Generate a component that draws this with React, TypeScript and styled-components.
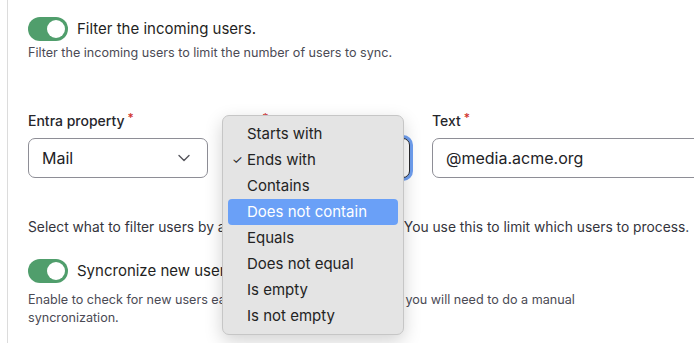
import React from "react";
import styled, { createGlobalStyle } from "styled-components";

const GlobalStyle = createGlobalStyle`
  html, body {
    margin: 0;
    padding: 0;
    background: #ffffff;
    overflow: hidden;
  }
  body {
    font-family: Inter, "Noto Sans", "Liberation Sans", sans-serif;
    color: #222226;
  }
`;

const Page = styled.div`
  margin-left: 7px;
  border-left: 1px solid #dcdcdc;
  min-height: 343px;
  padding: 17px 0 0 20px;
  box-sizing: border-box;
  width: 800px;
`;

const ToggleRow = styled.div<{ top?: number }>`
  display: flex;
  align-items: center;
  gap: 9px;
  height: 24px;
  margin-top: ${(p) => p.top ?? 0}px;
`;

const Switch = styled.div<{ on: boolean }>`
  position: relative;
  width: 40px;
  height: 24px;
  border-radius: 12px;
  background: ${(p) => (p.on ? "#509e6c" : "#c9c9cf")};
  flex: none;

  &::after {
    content: "";
    position: absolute;
    top: 3px;
    left: ${(p) => (p.on ? "19px" : "3px")};
    width: 18px;
    height: 18px;
    border-radius: 50%;
    background: #ffffff;
  }
`;

const ToggleLabel = styled.span`
  font-size: 15px;
  line-height: 24px;
  color: #1f1f23;
  white-space: nowrap;
`;

const Help = styled.p<{ top: number; maxWidth?: number }>`
  margin: ${(p) => p.top}px 0 0;
  font-size: 12.6px;
  line-height: 18px;
  color: #4b4b55;
  max-width: ${(p) => (p.maxWidth ? `${p.maxWidth}px` : "none")};
`;

const FieldHelp = styled.p`
  margin: 40px 0 0;
  font-size: 13.8px;
  line-height: 18px;
  color: #34343c;
  white-space: nowrap;
`;

const Fields = styled.div`
  display: grid;
  grid-template-columns: 180px 180px 320px;
  column-gap: 22px;
  margin-top: 50px;
`;

const Field = styled.div`
  position: relative;
  display: flex;
  flex-direction: column;
  gap: 8px;
`;

const Label = styled.label`
  font-size: 14px;
  line-height: 18px;
  font-weight: 500;
  color: #26262b;
  display: flex;
  gap: 3px;

  span {
    color: #d0312d;
    font-size: 12px;
    line-height: 12px;
  }
`;

const SelectBox = styled.div<{ focused?: boolean }>`
  height: 40px;
  box-sizing: border-box;
  border: 1px solid ${(p) => (p.focused ? "#2a2a2e" : "#8e8e96")};
  border-radius: 7px;
  box-shadow: ${(p) => (p.focused ? "0 0 0 3px #6f9ff0" : "none")};
  display: flex;
  align-items: center;
  justify-content: space-between;
  padding: 0 17px 0 13px;
  font-size: 16px;
  color: #222226;
  background: #ffffff;
`;

const TextInput = styled.div`
  height: 40px;
  box-sizing: border-box;
  border: 1px solid #8e8e96;
  border-radius: 7px;
  display: flex;
  align-items: center;
  padding: 0 13px;
  font-size: 16px;
  color: #222226;
`;

const Menu = styled.ul`
  position: absolute;
  left: -8px;
  top: 3px;
  width: 182px;
  margin: 0;
  padding: 5px;
  box-sizing: border-box;
  list-style: none;
  background: #e4e4e4;
  border: 1px solid #c6c6c6;
  border-radius: 7px;
  box-shadow: 0 6px 18px rgba(0, 0, 0, 0.18);
  z-index: 10;
`;

const MenuItem = styled.li<{ active?: boolean }>`
  position: relative;
  height: 26px;
  line-height: 26px;
  padding-left: 19px;
  border-radius: 4px;
  font-size: 15px;
  color: ${(p) => (p.active ? "#ffffff" : "#232323")};
  background: ${(p) => (p.active ? "#6aa0f7" : "transparent")};
`;

const Check = styled.span`
  position: absolute;
  left: 4px;
  top: 0;
  font-size: 12px;
`;

const Chevron = () => (
  <svg width="12" height="8" viewBox="0 0 12 8" fill="none">
    <path d="M1 1.5l5 5 5-5" stroke="#55555c" strokeWidth="1.4" strokeLinecap="round" strokeLinejoin="round" />
  </svg>
);

const operators = [
  "Starts with",
  "Ends with",
  "Contains",
  "Does not contain",
  "Equals",
  "Does not equal",
  "Is empty",
  "Is not empty",
];

export default function App() {
  return (
    <>
      <GlobalStyle />
      <Page>
        <ToggleRow>
          <Switch on />
          <ToggleLabel>Filter the incoming users.</ToggleLabel>
        </ToggleRow>
        <Help top={3}>Filter the incoming users to limit the number of users to sync.</Help>

        <Fields>
          <Field>
            <Label>
              Entra property<span>*</span>
            </Label>
            <SelectBox>
              Mail
              <Chevron />
            </SelectBox>
          </Field>
          <Field>
            <Label>
              Rule<span>*</span>
            </Label>
            <SelectBox focused>
              Ends with
              <Chevron />
            </SelectBox>
            <Menu>
              {operators.map((op) => (
                <MenuItem key={op} active={op === "Does not contain"}>
                  {op === "Ends with" && <Check>✓</Check>}
                  {op}
                </MenuItem>
              ))}
            </Menu>
          </Field>
          <Field>
            <Label>
              Text<span>*</span>
            </Label>
            <TextInput>@media.acme.org</TextInput>
          </Field>
        </Fields>

        <FieldHelp>
          Select what to filter users by attribute, rule and text label. You use this to limit which users to process.
        </FieldHelp>

        <ToggleRow top={23}>
          <Switch on />
          <ToggleLabel>Syncronize new users automatically</ToggleLabel>
        </ToggleRow>
        <Help top={8} maxWidth={590}>
          Enable to check for new users each time the sync is run. If not, you will need to do a manual
          syncronization.
        </Help>
      </Page>
    </>
  );
}
